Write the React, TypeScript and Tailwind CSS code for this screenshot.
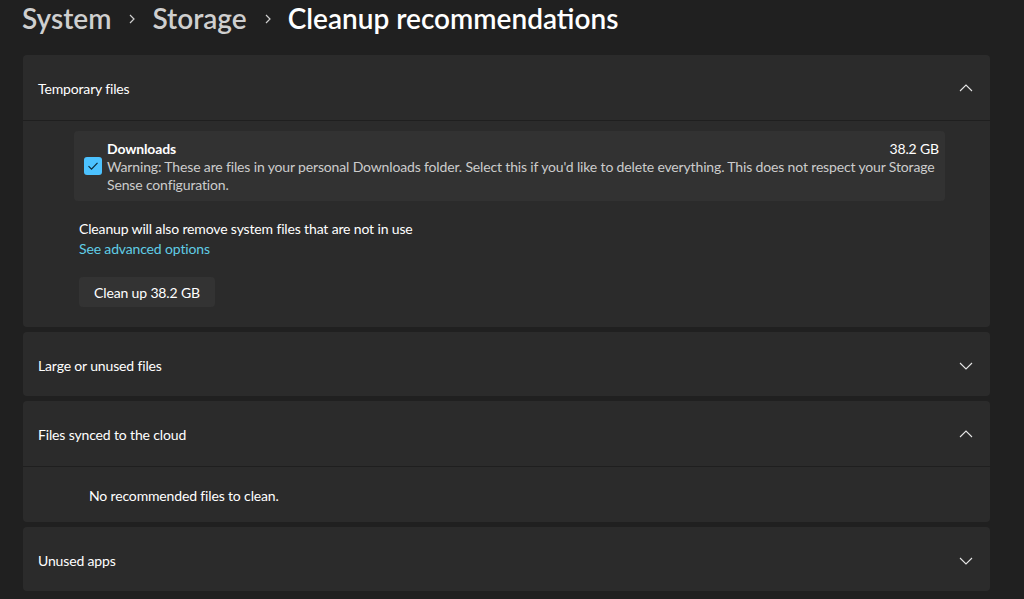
import React from 'react'

const font = { fontFamily: '"Segoe UI", Lato, "Noto Sans", sans-serif' }

function Chevron({ up }: { up?: boolean }) {
  return (
    <svg width="14" height="8" viewBox="0 0 14 8" className="text-[#e6e6e6]">
      {up ? (
        <path d="M1 7 L7 1 L13 7" fill="none" stroke="currentColor" strokeWidth="1.1" />
      ) : (
        <path d="M1 1 L7 7 L13 1" fill="none" stroke="currentColor" strokeWidth="1.1" />
      )}
    </svg>
  )
}

function Crumb() {
  return (
    <svg width="6" height="10" viewBox="0 0 6 10" className="ml-[18px] mr-[17px] mt-[2px] text-[#cfcfcf]">
      <path d="M1 1 L5 5 L1 9" fill="none" stroke="currentColor" strokeWidth="1.2" />
    </svg>
  )
}

function Header({ title, up, tall }: { title: string; up?: boolean; tall?: boolean }) {
  return (
    <div className={`flex items-center justify-between ${tall ? 'h-[65px] pt-[1px]' : 'h-[64px] pt-[3px]'} pl-[15px] pr-[17px]`}>
      <span className="text-[14px] text-white tracking-[-0.15px]">{title}</span>
      <Chevron up={up} />
    </div>
  )
}

export default function App() {
  return (
    <div className="w-[1024px] h-[599px] bg-[#202020] overflow-hidden text-white" style={font}>
      {/* Breadcrumb */}
      <div className="flex items-center h-[40px] pl-[22px] pb-[4px] text-[28px] font-semibold leading-none">
        <span className="text-[#cfcfcf]">System</span>
        <Crumb />
        <span className="text-[#cfcfcf]">Storage</span>
        <Crumb />
        <span className="text-white">Cleanup recommendations</span>
      </div>

      <div className="flex flex-col gap-[5px] ml-[23px] w-[967px] mt-[15px] tracking-[-0.15px]">
        {/* Temporary files */}
        <div className="bg-[#2b2b2b] rounded-[4px]">
          <Header title="Temporary files" up tall />
          <div className="border-t border-[#1f1f1f] pt-[10px] pb-[20px]">
            <div className="ml-[51px] w-[871px] h-[70px] bg-[#323232] rounded-[4px] flex items-start pl-[10px] pr-[6px] pt-[9px]">
              <div className="w-[18px] h-[18px] mt-[17px] rounded-[3px] bg-[#4cc2ff] flex items-center justify-center shrink-0">
                <svg width="12" height="10" viewBox="0 0 12 10">
                  <path d="M1.5 5.2 L4.5 8.2 L10.5 1.8" fill="none" stroke="#0b2a3a" strokeWidth="1.2" />
                </svg>
              </div>
              <div className="ml-[5px] flex-1 text-[14px] leading-[18px]">
                <div className="flex justify-between">
                  <span className="font-bold text-white">Downloads</span>
                  <span className="text-white">38.2 GB</span>
                </div>
                <div className="text-[#cccccc] whitespace-nowrap">
                  Warning: These are files in your personal Downloads folder. Select this if you'd like to delete everything. This does not respect your Storage
                  <br />
                  Sense configuration.
                </div>
              </div>
            </div>
            <div className="ml-[56px] mt-[18px] text-[14px] leading-[20px]">
              <div className="text-white">Cleanup will also remove system files that are not in use</div>
              <div className="text-[#60cde6]">See advanced options</div>
              <button className="mt-[18px] w-[136px] h-[30px] pt-[2px] rounded-[4px] bg-[#333333] text-white text-[14px]">
                Clean up 38.2 GB
              </button>
            </div>
          </div>
        </div>

        {/* Large or unused files */}
        <div className="bg-[#2b2b2b] rounded-[4px]">
          <Header title="Large or unused files" />
        </div>

        {/* Files synced to the cloud */}
        <div className="bg-[#2b2b2b] rounded-[4px]">
          <Header title="Files synced to the cloud" up tall />
          <div className="border-t border-[#1f1f1f] h-[56px] flex items-center pl-[66px] pt-[2px] text-[14px] text-white">
            No recommended files to clean.
          </div>
        </div>

        {/* Unused apps */}
        <div className="bg-[#2b2b2b] rounded-[4px]">
          <Header title="Unused apps" />
        </div>
      </div>
    </div>
  )
}
